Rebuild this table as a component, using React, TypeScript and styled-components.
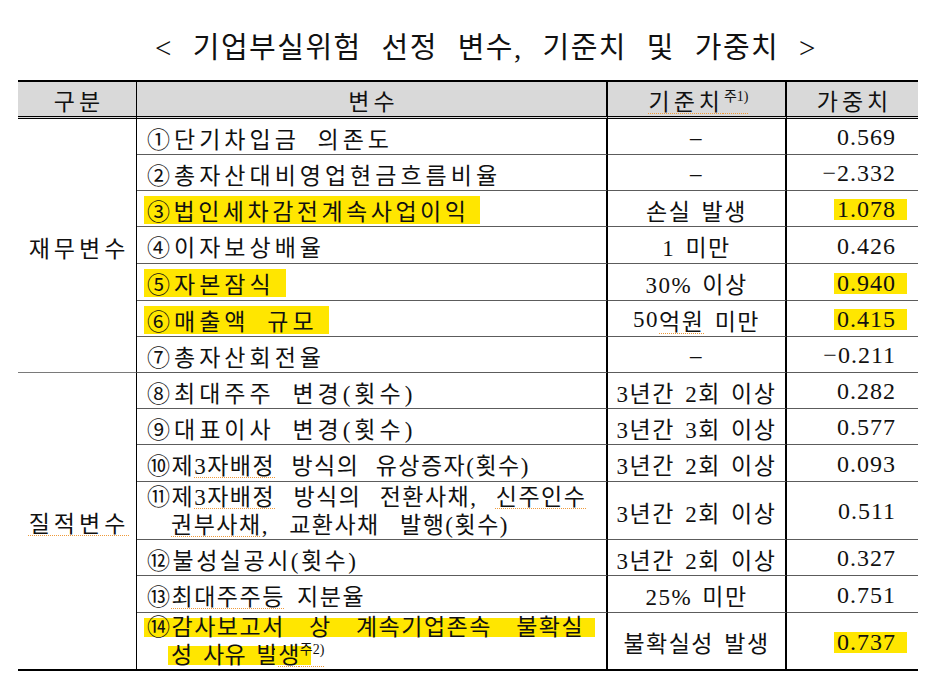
import React from 'react';
import styled, { createGlobalStyle } from 'styled-components';

const Global = createGlobalStyle`
  html, body { margin: 0; padding: 0; background: #fff; }
  body {
    font-family: "Liberation Serif", "Noto Sans CJK KR", serif;
    color: #111;
  }
`;

const Page = styled.div`
  width: 936px;
  height: 685px;
  box-sizing: border-box;
  padding: 0 18px;
  display: flex;
  flex-direction: column;
`;

const Title = styled.h1`
  margin: 0;
  height: 80px;
  padding: 10px 0 0 36px;
  box-sizing: border-box;
  display: flex;
  align-items: center;
  justify-content: center;
  font-family: "Liberation Serif", "Noto Sans CJK KR", serif;
  font-weight: 400;
  font-size: 29px;
  letter-spacing: 1.5px;
  word-spacing: 11px;
  white-space: pre;
`;

const Sheet = styled.div`
  display: grid;
  width: 900px;
  grid-template-columns: 119px 471px 179px 131px;
  grid-template-rows: 39px 36px 36px 36px 37px 37px 36px 36px 36px 36px 37px 58px 36px 37px 58px;
  font-size: 23px;
`;

type Edge = 'thin' | 'thick' | 'none';

const edgeCss = (e: Edge) =>
  e === 'thin' ? '1px solid #000' : e === 'thick' ? '2px solid #000' : 'none';

const HeadCell = styled.div<{ $edge: Edge }>`
  box-sizing: border-box;
  background: #d9d9d9;
  border-top: 2px solid #000;
  border-bottom: 3px double #000;
  border-right: ${(p) => edgeCss(p.$edge)};
  display: flex;
  align-items: center;
  justify-content: center;
  letter-spacing: 4px;
  padding: 2px 0 0 4px;
`;

const BodyCell = styled.div<{ $edge: Edge; $end?: boolean }>`
  box-sizing: border-box;
  border-right: ${(p) => edgeCss(p.$edge)};
  border-bottom: ${(p) => (p.$end ? '2px solid #000' : '1px solid #5c5c5c')};
  display: flex;
  align-items: center;
  min-width: 0;
`;

const GroupCell = styled(BodyCell)<{ $span: number }>`
  grid-row: span ${(p) => p.$span};
  justify-content: center;
  letter-spacing: 4px;
  border-bottom-color: ${(p) => (p.$end ? '#000' : '#7a7a7a')};
  padding: 2px 0 0 4px;
`;

const VarCell = styled(BodyCell)<{ $ls: number; $ws: number }>`
  padding-left: 10px;
  letter-spacing: ${(p) => p.$ls}px;
  word-spacing: ${(p) => p.$ws}px;
  white-space: pre;
  padding-top: 2px;
`;

const Lines = styled.div`
  display: flex;
  flex-direction: column;
  line-height: 28px;
`;

const TextLine = styled.span<{ $ls: number; $ws: number; $indent?: boolean }>`
  display: block;
  padding-left: ${(p) => (p.$indent ? 24 : 0)}px;
  letter-spacing: ${(p) => p.$ls}px;
  word-spacing: ${(p) => p.$ws}px;
`;

const CritCell = styled(BodyCell)`
  justify-content: center;
  letter-spacing: 1.5px;
  word-spacing: 3px;
  white-space: pre;
  padding-top: 2px;
`;

const WeightCell = styled(BodyCell)`
  justify-content: flex-end;
  padding: 2px 22px 0 0;
  font-size: 24px;
  letter-spacing: 1px;
`;

const HL = styled.span`
  background: linear-gradient(
    to bottom,
    transparent 3px,
    #ffe600 3px,
    #ffe600 calc(100% - 3px),
    transparent calc(100% - 3px)
  );
  padding: 0 11px 0 3px;
  margin: 0 -11px 0 -3px;
`;

const Sup = styled.span`
  font-size: 14px;
  letter-spacing: 0;
  word-spacing: 0;
  vertical-align: 9px;
  line-height: 0;
`;

const Squig = styled.span`
  text-decoration-line: underline;
  text-decoration-style: dotted;
  text-decoration-color: #ee9a3a;
  text-decoration-thickness: 1px;
  text-underline-offset: 3px;
`;

type Row = {
  label: React.ReactNode;
  crit: React.ReactNode;
  weight: string;
  hl?: boolean;
  ls?: number;
  ws?: number;
};

const finance: Row[] = [
  { label: '①단기차입금 의존도', crit: '–', weight: '0.569' },
  { label: '②총자산대비영업현금흐름비율', crit: '–', weight: '−2.332' },
  { label: <HL>③법인세차감전계속사업이익</HL>, crit: '손실 발생', weight: '1.078', hl: true, ls: 3.5 },
  { label: '④이자보상배율', crit: '1 미만', weight: '0.426' },
  { label: <HL>⑤자본잠식</HL>, crit: '30% 이상', weight: '0.940', hl: true },
  { label: <HL>⑥매출액 규모</HL>, crit: <>50<Squig>억원</Squig> 미만</>, weight: '0.415', hl: true },
  { label: '⑦총자산회전율', crit: '–', weight: '−0.211' },
];

const quality: Row[] = [
  { label: '⑧최대주주 변경(횟수)', crit: '3년간 2회 이상', weight: '0.282' },
  { label: '⑨대표이사 변경(횟수)', crit: '3년간 3회 이상', weight: '0.577' },
  {
    label: <>⑩제<Squig>3자배정</Squig> 방식의 유상증자(횟수)</>,
    crit: '3년간 2회 이상',
    weight: '0.093',
    ls: 1.5,
    ws: 9,
  },
  {
    label: (
      <Lines>
        <TextLine $ls={1.5} $ws={11}>
          ⑪제<Squig>3자배정</Squig> 방식의 전환사채, <Squig>신주인수</Squig>
        </TextLine>
        <TextLine $ls={1.5} $ws={13} $indent>
          <Squig>권부사채</Squig>, 교환사채 발행(횟수)
        </TextLine>
      </Lines>
    ),
    crit: '3년간 2회 이상',
    weight: '0.511',
  },
  { label: '⑫불성실공시(횟수)', crit: '3년간 2회 이상', weight: '0.327', ls: 2.5 },
  { label: <>⑬<Squig>최대주주등</Squig> 지분율</>, crit: '25% 미만', weight: '0.751', ls: 1.5, ws: 5 },
  {
    label: (
      <Lines>
        <TextLine $ls={1.5} $ws={17}>
          <HL>⑭감사보고서 상 계속기업존속 불확실</HL>
        </TextLine>
        <TextLine $ls={0.5} $ws={4} $indent>
          <HL>성 사유 발</HL>
          <Squig>
            <HL>생</HL>
            <Sup>주2)</Sup>
          </Squig>
        </TextLine>
      </Lines>
    ),
    crit: '불확실성 발생',
    weight: '0.737',
    hl: true,
  },
];

const Group: React.FC<{ name: React.ReactNode; rows: Row[]; end?: boolean }> = ({ name, rows, end }) => (
  <>
    {rows.map((r, i) => {
      const last = !!end && i === rows.length - 1;
      return (
        <React.Fragment key={i}>
          {i === 0 && (
            <GroupCell $edge="thin" $span={rows.length} $end={end}>
              {name}
            </GroupCell>
          )}
          <VarCell $edge="thick" $end={last} $ls={r.ls ?? 4} $ws={r.ws ?? 8}>
            {r.label}
          </VarCell>
          <CritCell $edge="thick" $end={last}>
            {r.crit}
          </CritCell>
          <WeightCell $edge="none" $end={last}>
            {r.hl ? <HL>{r.weight}</HL> : r.weight}
          </WeightCell>
        </React.Fragment>
      );
    })}
  </>
);

export default function App() {
  return (
    <Page>
      <Global />
      <Title>{'< 기업부실위험 선정 변수, 기준치 및 가중치 >'}</Title>
      <Sheet>
        <HeadCell $edge="thin">구분</HeadCell>
        <HeadCell $edge="thick">변수</HeadCell>
        <HeadCell $edge="thick">
          <Squig>
            기준치<Sup>주1)</Sup>
          </Squig>
        </HeadCell>
        <HeadCell $edge="none">가중치</HeadCell>
        <Group name="재무변수" rows={finance} />
        <Group name={<Squig>질적변수</Squig>} rows={quality} end />
      </Sheet>
    </Page>
  );
}
